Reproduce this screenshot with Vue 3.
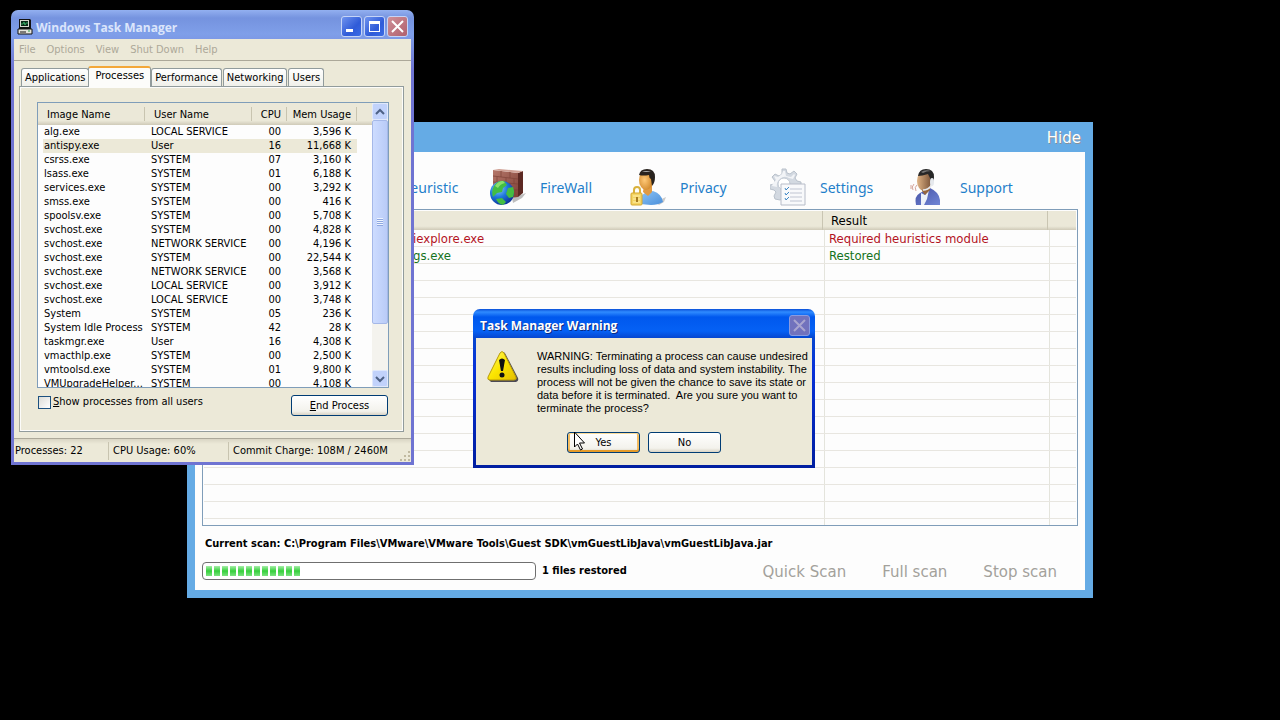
<template>
  <main class="desktop">
    <!-- Antispyware scanner -->
    <section class="scanner">
      <header class="scanner-bar">
        <button type="button" class="hide-btn">Hide</button>
      </header>

      <nav class="scanner-nav">
        <a href="#" class="nav-item"><span>Heuristic</span></a>
        <a href="#" class="nav-item">
          <svg viewBox="0 0 36 38">
            <defs>
              <linearGradient id="brick" x1="0" y1="0" x2="1" y2="1">
                <stop offset="0" stop-color="#b5776a" />
                <stop offset="1" stop-color="#7e3f35" />
              </linearGradient>
              <radialGradient id="globe" cx="0.35" cy="0.3" r="0.75">
                <stop offset="0" stop-color="#8fd0ff" />
                <stop offset="0.5" stop-color="#1f78dc" />
                <stop offset="1" stop-color="#0b2f96" />
              </radialGradient>
            </defs>
            <path d="M22 30l14-5-4 5-9 5z" fill="#000" opacity="0.25" />
            <path d="M3 2l25 3v24l-25 3z" fill="url(#brick)" />
            <path d="M28 5l5-2v22l-5 4z" fill="#5c2923" />
            <path d="M3 2l6-1 24 2-5 2z" fill="#cfa094" />
            <path d="M3 8l25 3M3 14l25 2M3 20l25 2M11 3v6M20 4v6M7 9v5M16 10v5M24 11v5M11 15v5M20 16v5M25 22v6" stroke="#7c4238" stroke-width="0.7" fill="none" />
            <circle cx="12" cy="25" r="12" fill="url(#globe)" />
            <path d="M4 18q4-6 10-5l3 4-4 3-1 4-5 1-4 4q-2-6 1-11zM18 20l5-1q2 5 0 10l-4 1-3-4zM6 31l6-1 4 4-3 3q-5-1-7-6z" fill="#43bd42" />
            <path d="M5 18q3-5 8-5l2 2q-5 1-7 5z" fill="#a9ee82" opacity="0.7" />
          </svg>
          <span>FireWall</span>
        </a>
        <a href="#" class="nav-item">
          <svg viewBox="0 0 36 38">
            <defs>
              <radialGradient id="skin" cx="0.4" cy="0.5" r="0.6">
                <stop offset="0" stop-color="#ffc978" />
                <stop offset="1" stop-color="#cf8629" />
              </radialGradient>
              <linearGradient id="shirt" x1="0" y1="0" x2="1" y2="1">
                <stop offset="0" stop-color="#8cc4f6" />
                <stop offset="1" stop-color="#4b8fda" />
              </linearGradient>
            </defs>
            <path d="M25 34l11-5-2 5-5 3z" fill="#000" opacity="0.2" />
            <path d="M10 36q-1-8 5-11l8-2q9 3 10 11-5 3-12 3z" fill="url(#shirt)" />
            <path d="M14 17h8v7l-4 4-5-4z" fill="#e09a42" />
            <ellipse cx="16" cy="12" rx="7" ry="10" fill="url(#skin)" />
            <path d="M9 7q1-6 8-6 8 0 8 8 0 6-3 9l-1-7q-2-1-2-4-6 1-10 0z" fill="#29231f" />
            <path d="M12 4q4-2 9 0-4 0-9 0z" fill="#aaa" />
            <path d="M4 26v-4q0-3 3-3t3 3v4" fill="none" stroke="#d9b13b" stroke-width="2" />
            <rect x="1" y="25" width="11" height="12" rx="1" fill="#f4d465" stroke="#d5a72f" />
            <path d="M3 28h7M3 31h7M3 34h7" stroke="#fff0ae" />
            <path d="M6 29h2v5h-2z" fill="#a67b1f" />
          </svg>
          <span>Privacy</span>
        </a>
        <a href="#" class="nav-item">
          <svg viewBox="0 0 36 38">
            <path d="M12 1h4l1 4 3 1 4-3 3 3-2 4 2 3 4 1v4l-4 2-2 5-15 7-5-1-1-3 2-4-2-2-4-1v-4l4-1 1-3-3-4 3-3 4 2 3-2z" fill="#d3d9e1" stroke="#b9c1cb" />
            <path d="M13 3h2l1 5 5 1 3-3 1 1-2 4-4-1q-5-3-9 1-4 3-3 8l-5-1 1-3 3-3-2-4 4 1 4-3z" fill="#f2f4f7" />
            <circle cx="14" cy="16" r="6" fill="#fff" stroke="#c2c9d3" />
            <path d="M11 16h24v21h-24z" fill="#f8f9fb" stroke="#b7bcc8" />
            <path d="M20 21h12M20 25h12M20 29h12M20 33h12" stroke="#c0c5d2" />
            <path d="M15 20l1 2 3-3M15 25l1 2 3-3M15 30l1 2 3-3" fill="none" stroke="#4088c6" />
          </svg>
          <span>Settings</span>
        </a>
        <a href="#" class="nav-item">
          <svg viewBox="0 0 36 38">
            <defs>
              <linearGradient id="face" x1="0" y1="0" x2="1" y2="0">
                <stop offset="0" stop-color="#dfb384" />
                <stop offset="1" stop-color="#7d563a" />
              </linearGradient>
              <linearGradient id="jacket" x1="0" y1="0" x2="1" y2="1">
                <stop offset="0" stop-color="#4652a5" />
                <stop offset="1" stop-color="#7186d6" />
              </linearGradient>
            </defs>
            <path d="M6 37q-2-9 4-12l10-5q9 4 10 12v5z" fill="url(#jacket)" />
            <path d="M11 25l4 2 4-5-2 9-3 6h-3z" fill="#edf1f8" />
            <path d="M12 17h8v5l-5 5-3-4z" fill="#95653f" />
            <ellipse cx="14" cy="13" rx="7" ry="10" fill="url(#face)" />
            <path d="M8 8q1-7 8-7 8 0 8 8 0 5-3 8l-1-7-2-4q-6 2-10 2z" fill="#272727" />
            <path d="M11 4q4-3 10-1-5 0-8 2z" fill="#777" />
            <ellipse cx="22" cy="14" rx="2" ry="4" fill="#e6e9ed" />
            <path d="M21 18q-3 4-8 4" fill="none" stroke="#e6e9ed" stroke-width="1.500" />
            <path d="M7 17q-3 2-1 6M4 16q-3 3-1 6M1 17v4" fill="none" stroke="#c98d80" stroke-width="0.8" />
          </svg>
          <span>Support</span>
        </a>
      </nav>

      <div class="result-list">
        <table class="results">
          <colgroup>
            <col class="res-id"><col><col class="res-result"><col class="res-end">
          </colgroup>
          <thead>
            <tr><th></th><th></th><th>Result</th><th></th></tr>
          </thead>
          <tbody>
            <tr v-for="(row, i) in results" :key="i" :class="row.state">
              <td></td>
              <td>{{ row.file }}</td>
              <td>{{ row.result }}</td>
              <td></td>
            </tr>
          </tbody>
        </table>
      </div>

      <p class="current">Current scan: C:\Program Files\VMware\VMware Tools\Guest SDK\vmGuestLibJava\vmGuestLibJava.jar</p>

      <footer class="scanner-foot">
        <progress id="scan" max="328" value="96"></progress>
        <label for="scan">1 files restored</label>
        <div class="scan-actions">
          <button type="button" disabled>Quick Scan</button>
          <button type="button" disabled>Full scan</button>
          <button type="button" disabled>Stop scan</button>
        </div>
      </footer>
    </section>

    <!-- Windows Task Manager -->
    <section class="window taskmgr">
      <header class="title-bar">
        <svg class="app-icon" viewBox="0 0 16 16">
          <path d="M2 0h11l1 1v9h-12z" fill="#111" />
          <path d="M3 1h9v7h-9z" fill="#d8d8d0" />
          <path d="M4 2h7v5h-7z" fill="#0b2617" />
          <path d="M4 5h2l1-2 1 3 1-2h2" fill="none" stroke="#45d67c" stroke-width="0.7" />
          <path d="M1 10h14v5h-14z" fill="#e7e5dc" stroke="#111" />
          <path d="M3 13h6" stroke="#111" />
          <path d="M11 12h2" stroke="#2c9b4d" />
        </svg>
        <h1>Windows Task Manager</h1>
        <div class="caption-buttons">
          <button type="button" class="cap" aria-label="Minimize">
            <svg viewBox="0 0 19 19"><path d="M4 12h7v3h-7z" fill="#fff" /></svg>
          </button>
          <button type="button" class="cap" aria-label="Maximize">
            <svg viewBox="0 0 19 19"><path d="M4 4h11v11h-11zM5 7v7h9v-7z" fill="#fff" fill-rule="evenodd" /></svg>
          </button>
          <button type="button" class="cap cap-close" aria-label="Close">
            <svg viewBox="0 0 19 19"><path d="M4 4l11 11M15 4l-11 11" stroke="#fff" stroke-width="2" /></svg>
          </button>
        </div>
      </header>

      <div class="window-body">
        <nav class="menu">
          <button v-for="item in menu" :key="item" type="button" disabled>{{ item }}</button>
        </nav>

        <div class="tabs">
          <button
            v-for="tab in tabs"
            :key="tab"
            type="button"
            class="tab"
            :class="{ active: tab === activeTab }"
            @click="activeTab = tab"
          >{{ tab }}</button>
        </div>

        <div class="tab-panel">
          <div class="process-list">
            <table class="processes">
              <colgroup>
                <col class="p-image"><col class="p-user"><col class="p-cpu"><col class="p-mem"><col>
              </colgroup>
              <thead>
                <tr>
                  <th>Image Name</th>
                  <th>User Name</th>
                  <th class="num">CPU</th>
                  <th class="num">Mem Usage</th>
                  <th></th>
                </tr>
              </thead>
              <tbody>
                <tr v-for="(p, i) in processes" :key="i" :class="{ selected: i === 1 }">
                  <td>{{ p[0] }}</td>
                  <td>{{ p[1] }}</td>
                  <td class="num">{{ p[2] }}</td>
                  <td class="num">{{ p[3] }} K</td>
                  <td></td>
                </tr>
              </tbody>
            </table>
            <div class="scrollbar">
              <button type="button" class="arrow" aria-label="Scroll up">
                <svg viewBox="0 0 14 14"><path d="M3 9l4-4 4 4" fill="none" stroke="#4d6185" stroke-width="2" /></svg>
              </button>
              <div class="thumb"><span class="grip"></span></div>
              <button type="button" class="arrow" aria-label="Scroll down">
                <svg viewBox="0 0 14 14"><path d="M3 5l4 4 4-4" fill="none" stroke="#4d6185" stroke-width="2" /></svg>
              </button>
            </div>
          </div>

          <div class="panel-foot">
            <label class="check"><input type="checkbox"><span><u>S</u>how processes from all users</span></label>
            <button type="button" class="xp-btn end-btn"><u>E</u>nd Process</button>
          </div>
        </div>

        <footer class="status">
          <span class="s-proc">Processes: 22</span>
          <span class="s-cpu">CPU Usage: 60%</span>
          <span class="s-mem">Commit Charge: 108M / 2460M</span>
          <svg class="size-grip" viewBox="0 0 12 12">
            <path d="M9 1h2v2h-2zM9 5h2v2h-2zM5 5h2v2h-2zM9 9h2v2h-2zM5 9h2v2h-2zM1 9h2v2h-2z" fill="#c0b9a0" />
          </svg>
        </footer>
      </div>
    </section>

    <!-- Warning dialog -->
    <section class="window dialog" role="dialog" aria-labelledby="warn-title">
      <header class="title-bar">
        <h2 id="warn-title">Task Manager Warning</h2>
        <button type="button" class="cap cap-off" aria-label="Close" disabled>
          <svg viewBox="0 0 19 19"><path d="M4 4l11 11M15 4l-11 11" stroke="#a9a5cf" stroke-width="2" /></svg>
        </button>
      </header>
      <div class="window-body">
        <div class="message">
          <svg class="warn-icon" viewBox="0 0 32 32">
            <defs>
              <linearGradient id="warn" x1="0" y1="0" x2="1" y2="1">
                <stop offset="0" stop-color="#fffa70" />
                <stop offset="0.5" stop-color="#fbe500" />
                <stop offset="1" stop-color="#e4bd00" />
              </linearGradient>
            </defs>
            <path d="M16 2q2 0 3 3l12 23q1 3-2 4h-25l-2-2z" fill="#4c4a55" />
            <path d="M13 3q2-3 4 0l12 24q1 3-2 3h-24q-3 0-2-3z" fill="url(#warn)" stroke="#b99b09" />
            <path d="M12 10q3-3 6 0l-2 11h-2z" fill="#111" />
            <circle cx="15" cy="25" r="2.500" fill="#111" />
          </svg>
          <p>{{ warning }}</p>
        </div>
        <div class="dialog-buttons">
          <button type="button" class="xp-btn default">Yes</button>
          <button type="button" class="xp-btn">No</button>
        </div>
      </div>
    </section>

    <svg class="cursor" viewBox="0 0 12 20">
      <path d="M0.500 1v15l3-3 3 6 2-1-3-6h5z" fill="#fff" stroke="#000" />
    </svg>
  </main>
</template>

<script setup>
import { ref } from 'vue';

const menu = ['File', 'Options', 'View', 'Shut Down', 'Help'];
const tabs = ['Applications', 'Processes', 'Performance', 'Networking', 'Users'];
const activeTab = ref('Processes');

const processes = ref([
  ['alg.exe', 'LOCAL SERVICE', '00', '3,596'],
  ['antispy.exe', 'User', '16', '11,668'],
  ['csrss.exe', 'SYSTEM', '07', '3,160'],
  ['lsass.exe', 'SYSTEM', '01', '6,188'],
  ['services.exe', 'SYSTEM', '00', '3,292'],
  ['smss.exe', 'SYSTEM', '00', '416'],
  ['spoolsv.exe', 'SYSTEM', '00', '5,708'],
  ['svchost.exe', 'SYSTEM', '00', '4,828'],
  ['svchost.exe', 'NETWORK SERVICE', '00', '4,196'],
  ['svchost.exe', 'SYSTEM', '00', '22,544'],
  ['svchost.exe', 'NETWORK SERVICE', '00', '3,568'],
  ['svchost.exe', 'LOCAL SERVICE', '00', '3,912'],
  ['svchost.exe', 'LOCAL SERVICE', '00', '3,748'],
  ['System', 'SYSTEM', '05', '236'],
  ['System Idle Process', 'SYSTEM', '42', '28'],
  ['taskmgr.exe', 'User', '16', '4,308'],
  ['vmacthlp.exe', 'SYSTEM', '00', '2,500'],
  ['vmtoolsd.exe', 'SYSTEM', '01', '9,800'],
  ['VMUpgradeHelper...', 'SYSTEM', '00', '4,108'],
]);

// two findings, the rest are empty grid lines
const results = ref([
  { file: 'iexplore.exe', result: 'Required heuristics module', state: 'bad' },
  { file: 'gs.exe', result: 'Restored', state: 'good' },
  ...Array.from({ length: 16 }, () => ({ file: '', result: '', state: '' })),
]);

const warning = `WARNING: Terminating a process can cause undesired
results including loss of data and system instability. The
process will not be given the chance to save its state or
data before it is terminated.  Are you sure you want to
terminate the process?`;
</script>

<style>
body {
  margin: 0;
  background: #000;
}
</style>

<style scoped>
.desktop {
  position: relative;
  min-height: 100vh;
  overflow: hidden;
  background: #000;
  color: #000;
  font-family: "DejaVu Sans Condensed", "DejaVu Sans", sans-serif;
  font-size: 11px;
  line-height: 14px;
}

* {
  box-sizing: border-box;
}

button {
  font: inherit;
  color: inherit;
  padding: 0;
}

h1, h2, p {
  margin: 0;
}

svg {
  display: block;
}

table {
  border-collapse: separate;
  border-spacing: 0;
  table-layout: fixed;
}

th, td {
  padding: 0;
  font-weight: normal;
  text-align: left;
  white-space: nowrap;
}

/* Scanner */
.scanner {
  position: absolute;
  inset: 122px 187px;
  display: flex;
  flex-direction: column;
  border: 8px solid #65abe5;
  border-top: 0;
  background: #fdfdfd;
}

.scanner-bar {
  display: flex;
  justify-content: flex-end;
  align-items: center;
  height: 30px;
  padding: 2px 4px 0 0;
  background: #65abe5;
}

.hide-btn {
  border: 0;
  background: none;
  color: #fff;
  font-family: "DejaVu Sans", sans-serif;
  font-size: 15px;
  line-height: 18px;
  text-shadow: 1px 1px 0 #8b8f95;
}

.scanner-nav {
  display: flex;
  justify-content: flex-end;
  height: 57px;
  padding: 16px 35px 0 0;
}

.nav-item {
  display: grid;
  grid-template-columns: 36px 1fr;
  column-gap: 14px;
  align-items: center;
  width: 140px;
  height: 38px;
  color: #1f7fca;
  font-family: "Noto Sans", sans-serif;
  font-size: 14px;
  text-decoration: none;
}

.nav-item span {
  grid-column: 2;
  padding-top: 2px;
}

.nav-item svg {
  width: 36px;
  height: 38px;
}

.result-list {
  flex: 1;
  min-height: 0;
  margin: 0 7px;
  padding: 1px;
  overflow: hidden;
  border: 1px solid #7f9db9;
}

.results {
  width: 100%;
  font-size: 13px;
}

.res-id {
  width: 203px;
}

.res-result {
  width: 225px;
}

.res-end {
  width: 28px;
}

.results th {
  height: 19px;
  padding-left: 8px;
  background: linear-gradient(#ebe8d8 80%, #cfcab8);
  border-right: 1px solid #c9c5b2;
}

.results th:first-child, .results th:last-child {
  border-right: 0;
}

/* grid lines sit just right of the header dividers */
.results td {
  height: 17px;
  line-height: 14px;
  padding: 2px 0 0 6px;
  border-bottom: 1px solid #e8e6e0;
}

.results td:nth-child(n + 3) {
  background: linear-gradient(#e4e4dc, #e4e4dc) 1px 0 / 1px 100% no-repeat;
}

.bad {
  color: #b3141f;
}

.good {
  color: #157321;
}

.current {
  padding: 11px 10px 9px;
  font-weight: bold;
}

.scanner-foot {
  display: flex;
  align-items: center;
  height: 30px;
  padding: 0 28px 8px 7px;
}

.scanner-foot label {
  margin-left: 6px;
  font-weight: bold;
}

progress {
  appearance: none;
  width: 334px;
  height: 18px;
  padding: 3px;
  border: 1px solid #6f6f6f;
  border-radius: 4px;
  background: #fff;
}

progress::-webkit-progress-bar {
  background: transparent;
}

progress::-webkit-progress-value {
  background:
    repeating-linear-gradient(90deg, transparent 0 6px, #fff 6px 8px),
    linear-gradient(#a6efa8, #35cf3b 50%, #7be37f);
}

.scan-actions {
  display: flex;
  gap: 36px;
  margin-left: auto;
  padding-top: 2px;
  font-family: "DejaVu Sans", sans-serif;
  font-size: 15px;
  line-height: 18px;
  color: #a3a19b;
}

.scan-actions button {
  border: 0;
  background: none;
}

/* XP windows */
.window {
  position: absolute;
  display: flex;
  flex-direction: column;
  border-radius: 7px 7px 0 0;
}

.title-bar {
  display: flex;
  align-items: center;
  height: 29px;
  font-family: "Open Sans", sans-serif;
}

.title-bar h1, .title-bar h2 {
  flex: 1;
  padding-top: 2px;
  font-size: 12px;
  font-weight: bold;
  line-height: 18px;
}

.window-body {
  flex: 1;
  display: flex;
  flex-direction: column;
  background: #ece9d8;
}

.cap {
  width: 21px;
  height: 21px;
  border: 1px solid #c5d4f7;
  border-radius: 3px;
  background: linear-gradient(135deg, #6f93ee, #2f5bd8 60%, #3b6ce6);
}

.cap svg {
  width: 19px;
  height: 19px;
}

.cap-close {
  background: linear-gradient(135deg, #cf9098, #b0606d);
}

.taskmgr {
  top: 10px;
  left: 11px;
  width: 403px;
  padding: 0 3px 3px;
  background: linear-gradient(#93b0f0, #7593df 8px, #7f9fe9 24px, #6f74d2 60px);
}

.taskmgr .title-bar {
  padding: 4px 3px 0 3px;
}

.taskmgr h1 {
  color: #dbe5fb;
}

.app-icon {
  width: 16px;
  height: 16px;
  margin-right: 3px;
}

.caption-buttons {
  display: flex;
  gap: 2px;
}

.menu {
  display: flex;
  gap: 11px;
  height: 22px;
  padding: 0 5px;
  border-bottom: 1px solid #aca899;
  color: #aca899;
}

.menu button {
  border: 0;
  background: none;
}

.tabs {
  display: flex;
  align-items: flex-end;
  height: 25px;
  padding-left: 7px;
}

.tab {
  height: 18px;
  padding: 0 3px;
  border: 1px solid #919b9c;
  border-bottom: 0;
  border-radius: 3px 3px 0 0;
  background: linear-gradient(#fff, #f0f0ea);
}

.tab + .tab {
  margin-left: 1px;
}

.tab.active {
  position: relative;
  height: 21px;
  margin: 0 -1px -1px;
  padding: 0 6px 3px;
  border-top: 2px solid #f3a73a;
  background: #fcfcfa;
}

.tab-panel {
  margin: 0 7px 0 5px;
  padding: 15px 14px;
  border: 1px solid #919b9c;
  border-left-color: #a9aca3;
  box-shadow: inset 1px 1px 0 #fcfcfa, inset -1px -1px 0 #fcfcfa;
}

.process-list {
  display: flex;
  height: 286px;
  margin-left: 3px;
  overflow: hidden;
  border: 1px solid #7f9db9;
  background: #fdfdfd;
}

.processes {
  flex: 1;
  align-self: flex-start;
  width: 0;
}

.p-image, .p-user {
  width: 107px;
}

.p-cpu {
  width: 35px;
}

.p-mem {
  width: 70px;
}

.processes th {
  height: 22px;
  padding: 2px 5px 0 9px;
  background:
    linear-gradient(#c8c4b0, #c8c4b0) right 4px / 1px 14px no-repeat,
    linear-gradient(#ebe8d8 80%, #cfcab8);
}

.processes th:last-child {
  background: linear-gradient(#ebe8d8 80%, #cfcab8);
}

.processes td {
  height: 14px;
  padding: 0 5px 0 6px;
}

.processes td:first-child {
  padding-left: 1px;
  border-left: 5px solid transparent;
  background-clip: padding-box;
}

.processes td.num {
  padding-right: 6px;
}

.processes .num {
  padding-left: 0;
  text-align: right;
}

.processes th.num {
  padding-right: 6px;
}

.selected td:not(:last-child) {
  background-color: #ece9d8;
}

.scrollbar {
  display: flex;
  flex-direction: column;
  width: 16px;
  background: #f4f3ee;
}

.arrow {
  width: 16px;
  height: 17px;
  border: 1px solid #dfe8fc;
  border-radius: 2px;
  background: #c1d2fb;
}

.arrow svg {
  width: 14px;
  height: 14px;
}

.thumb {
  display: flex;
  align-items: center;
  justify-content: center;
  height: 204px;
  margin-bottom: auto;
  border: 1px solid #a5b8e8;
  border-radius: 2px;
  background: linear-gradient(90deg, #cddcff, #b9cbf7);
}

.grip {
  width: 6px;
  height: 8px;
  background: repeating-linear-gradient(#eef4fe 0 1px, #8ea7e0 1px 2px);
}

.panel-foot {
  display: flex;
  justify-content: space-between;
  align-items: flex-start;
  padding: 7px 1px 0 4px;
}

.check {
  display: flex;
  align-items: center;
  gap: 2px;
}

.check input {
  appearance: none;
  width: 13px;
  height: 13px;
  margin: 0;
  border: 1px solid #1c5180;
  background: linear-gradient(135deg, #dcdcd7, #fff);
}

.xp-btn {
  width: 73px;
  height: 21px;
  border: 1px solid #003c74;
  border-radius: 3px;
  background: linear-gradient(#fff, #f3f2ec 80%, #d9d3c4);
}

.xp-btn.default {
  box-shadow: inset 0 -2px 0 #e59b2a, inset 0 1px 0 #fbdc9a, inset 2px 0 0 #f3bd62, inset -2px 0 0 #f3bd62;
}

.end-btn {
  width: 97px;
}

.status {
  display: flex;
  align-items: center;
  height: 24px;
  margin-top: 6px;
  border-top: 1px solid #aca899;
  background: linear-gradient(#d9d5c4, #ece9d8 5px);
}

.status span {
  padding: 2px 4px;
}

.status .s-proc {
  width: 95px;
  padding-left: 1px;
  border-right: 1px solid #c8c4b0;
}

.status .s-cpu {
  width: 120px;
  border-right: 1px solid #c8c4b0;
}

.size-grip {
  align-self: flex-end;
  width: 12px;
  height: 12px;
  margin-left: auto;
}

/* Dialog */
.dialog {
  top: 309px;
  left: 473px;
  width: 342px;
  padding: 0 3px 3px;
  background: linear-gradient(#0a4fd8, #2f8bff 3px, #0058ee 8px, #0561f5 22px, #0646cf 29px, #0831d9 60px, #001ea0);
}

.dialog .title-bar {
  padding: 3px 2px 0 4px;
  color: #fff;
  text-shadow: 1px 1px 0 #0b2b82;
}

.cap-off {
  border-color: #8a9be0;
  background: #7172bd;
}

.message {
  display: flex;
  gap: 18px;
  padding: 12px 6px 0 11px;
}

.warn-icon {
  flex: none;
  width: 32px;
  height: 32px;
}

.message p {
  font-family: "Liberation Sans", Arial, sans-serif;
  line-height: 13px;
  white-space: pre;
}

.dialog-buttons {
  display: flex;
  justify-content: center;
  gap: 8px;
  padding: 17px 0 12px;
}

.cursor {
  position: absolute;
  top: 431px;
  left: 574px;
  width: 12px;
  height: 20px;
}
</style>
